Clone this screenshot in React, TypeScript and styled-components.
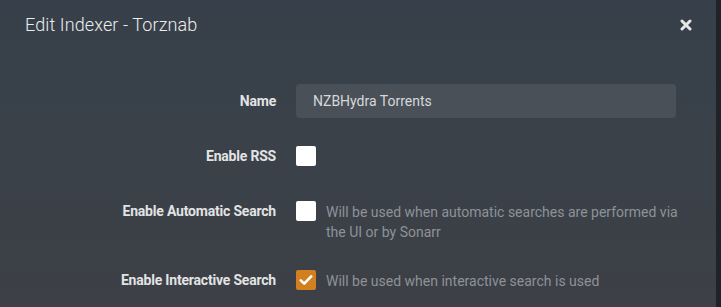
import React from 'react';
import styled, { createGlobalStyle } from 'styled-components';

const GlobalStyle = createGlobalStyle`
  html, body {
    margin: 0;
    padding: 0;
    background: #1f2327;
  }
  body {
    font-family: Roboto, "Liberation Sans", Arial, sans-serif;
  }
`;

const Page = styled.div`
  display: flex;
  width: 721px;
  height: 307px;
  overflow: hidden;
  background: #1f2327;
`;

const Modal = styled.div`
  width: 716px;
  height: 307px;
  background: linear-gradient(180deg, #37404a 0%, #3a4149 50%, #3d4046 100%);
  display: flex;
  flex-direction: column;
`;

const Header = styled.div`
  display: flex;
  align-items: center;
  justify-content: space-between;
  height: 50px;
  padding: 0 24px 0 25px;
  box-sizing: border-box;
`;

const Title = styled.h2`
  margin: 0;
  font-size: 18px;
  font-weight: 300;
  color: #eceded;
  line-height: 20px;
  letter-spacing: 0.1px;
`;

const CloseButton = styled.button`
  border: none;
  background: none;
  padding: 0;
  width: 12px;
  height: 12px;
  display: flex;
  cursor: pointer;
`;

const Body = styled.div`
  padding: 34px 0 0 0;
  display: flex;
  flex-direction: column;
  gap: 21px;
`;

const Row = styled.div`
  display: grid;
  grid-template-columns: 276px 400px;
  column-gap: 20px;
  align-items: start;
`;

const Label = styled.label`
  text-align: right;
  font-size: 14px;
  font-weight: 700;
  letter-spacing: -0.2px;
  color: #e2e3e4;
  line-height: 34px;
`;

const TextInput = styled.input`
  box-sizing: border-box;
  width: 380px;
  height: 34px;
  border: none;
  border-radius: 4px;
  background: #495058;
  padding: 0 17px;
  font-family: Roboto, "Liberation Sans", Arial, sans-serif;
  font-size: 14px;
  color: #d6d8da;
  outline: none;
`;

const CheckGroup = styled.div`
  display: flex;
  align-items: flex-start;
  gap: 10px;
  padding-top: 7px;
`;

const Box = styled.span<{ $checked?: boolean }>`
  flex: none;
  width: 20px;
  height: 20px;
  border-radius: 2px;
  box-sizing: border-box;
  background: ${(p) => (p.$checked ? '#d2801f' : '#ffffff')};
  display: flex;
  align-items: center;
  justify-content: center;
`;

const Help = styled.span`
  font-size: 14px;
  line-height: 20px;
  color: #8e9297;
  margin-top: 1px;
  max-width: 352px;
`;

const Checkbox: React.FC<{ checked?: boolean; help?: string }> = ({ checked, help }) => (
  <CheckGroup>
    <Box $checked={checked}>
      {checked && (
        <svg width="14" height="12" viewBox="0 0 14 12">
          <path d="M1.8 6.4 L5.2 9.6 L12.2 2.4" fill="none" stroke="#fff" strokeWidth="2.6" strokeLinecap="round" strokeLinejoin="round" />
        </svg>
      )}
    </Box>
    {help && <Help>{help}</Help>}
  </CheckGroup>
);

const App: React.FC = () => (
  <>
    <GlobalStyle />
    <Page>
      <Modal>
        <Header>
          <Title>Edit Indexer - Torznab</Title>
          <CloseButton aria-label="Close">
            <svg width="12" height="12" viewBox="0 0 12 12">
              <path d="M2 2 L10 10 M10 2 L2 10" stroke="#e6e7e8" strokeWidth="3" strokeLinecap="round" />
            </svg>
          </CloseButton>
        </Header>
        <Body>
          <Row>
            <Label>Name</Label>
            <TextInput defaultValue="NZBHydra Torrents" />
          </Row>
          <Row>
            <Label>Enable RSS</Label>
            <Checkbox />
          </Row>
          <Row>
            <Label>Enable Automatic Search</Label>
            <Checkbox help="Will be used when automatic searches are performed via the UI or by Sonarr" />
          </Row>
          <Row>
            <Label>Enable Interactive Search</Label>
            <Checkbox checked help="Will be used when interactive search is used" />
          </Row>
        </Body>
      </Modal>
    </Page>
  </>
);

export default App;
